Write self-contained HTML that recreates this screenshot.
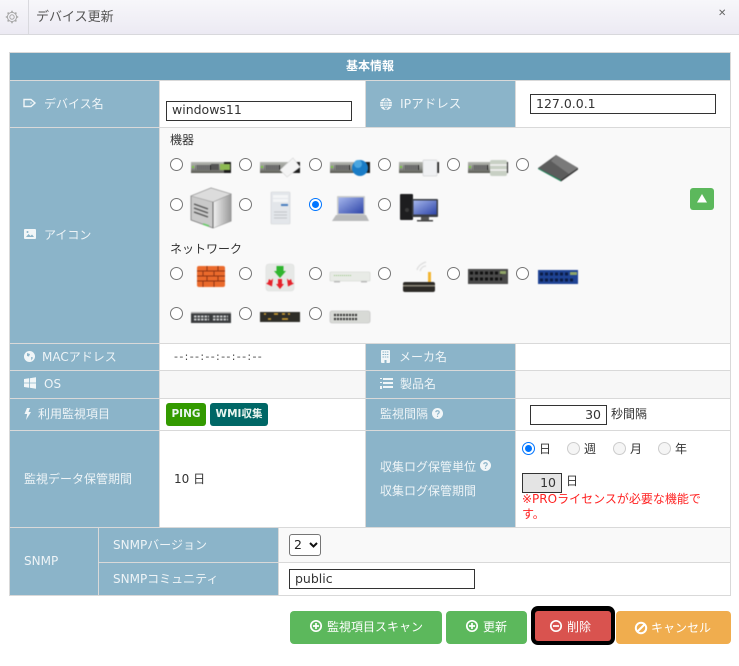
<!DOCTYPE html>
<html lang="ja"><head><meta charset="utf-8"><title>デバイス更新</title>
<style>
html,body{margin:0;padding:0;width:739px;height:666px;overflow:hidden;background:#fff}
body{position:relative;font-family:"DejaVu Sans","Noto Sans CJK JP",sans-serif;font-size:12px;color:#333}
.b{position:absolute}
.th{position:absolute;background:#8bb4c9}
.t{position:absolute;white-space:nowrap;line-height:16px}
.w{color:#eef4f7}
.f{position:absolute;box-sizing:border-box;background:#fff;border:1px solid #333;height:20px;line-height:17px;padding:0 5px;font-size:12.5px;color:#333;white-space:nowrap}
.r{position:absolute;box-sizing:border-box;width:13px;height:13px;border-radius:50%;border:1px solid #767676;background:#fff}
.r.on{border:1.5px solid #0075ff;background:#fff}
.r.on:after{content:"";position:absolute;left:1.5px;top:1.5px;width:7px;height:7px;border-radius:50%;background:#0075ff}
.r.off{border-color:#ccc;background:#f5f5f5}
.btn{position:absolute;box-sizing:border-box;top:611px;height:33px;border-radius:4px;color:#fff;font-size:12px;line-height:33px;text-align:center;white-space:nowrap}
svg{position:absolute;overflow:visible}
.tag{position:absolute;top:403px;height:23px;border-radius:3px;color:#e9f5ef;font-weight:bold;font-size:10.5px;line-height:23px;text-align:center;white-space:nowrap}
</style></head><body>

<!-- title bar -->
<div class="b" style="left:0;top:0;width:739px;height:34px;background:linear-gradient(#f7f7fa,#eceaf3);border-bottom:1px solid #d8d8dc"></div>
<div class="b" style="left:28px;top:0;width:1px;height:34px;background:#d9d9de"></div>
<svg style="left:5px;top:10px" width="14" height="14" viewBox="0 0 14 14" fill="none" stroke="#a8a8a8" stroke-width="1"><circle cx="7" cy="7" r="2.2"/><circle cx="7" cy="7" r="4.6"/><path d="M7 .8v1.600M7 11.600v1.600M.8 7h1.600M11.600 7h1.600M2.600 2.600l1.100 1.100M10.300 10.300l1.100 1.100M2.600 11.400l1.100-1.100M10.300 3.700l1.100-1.100" stroke-width="1.600"/></svg>
<div class="t" style="left:36px;top:10px;font-size:13px;color:#555">デバイス更新</div>
<div class="t" style="left:718px;top:6px;font-size:10px;font-weight:bold;color:#666">✕</div>

<!-- table frame -->
<div class="b" style="left:9px;top:52px;width:722px;height:544px;background:#d9d9d9"></div>
<div class="b" style="left:10px;top:53px;width:720px;height:27px;background:#689eba"></div>
<div class="t" style="left:346px;top:58px;color:#fff;font-size:12px;font-weight:bold">基本情報</div>

<!-- cell backgrounds -->
<div class="th" style="left:10px;top:81px;width:149px;height:46px"></div>
<div class="b" style="left:160px;top:81px;width:205px;height:46px;background:#fff"></div>
<div class="th" style="left:366px;top:81px;width:149px;height:46px"></div>
<div class="b" style="left:516px;top:81px;width:214px;height:46px;background:#fff"></div>

<div class="th" style="left:10px;top:128px;width:149px;height:215px"></div>
<div class="b" style="left:160px;top:128px;width:570px;height:215px;background:#f9f9f9"></div>

<div class="th" style="left:10px;top:344px;width:149px;height:26px"></div>
<div class="b" style="left:160px;top:344px;width:205px;height:26px;background:#fff"></div>
<div class="th" style="left:366px;top:344px;width:149px;height:26px"></div>
<div class="b" style="left:516px;top:344px;width:214px;height:26px;background:#fff"></div>

<div class="th" style="left:10px;top:371px;width:149px;height:27px"></div>
<div class="b" style="left:160px;top:371px;width:205px;height:27px;background:#f7f7f7"></div>
<div class="th" style="left:366px;top:371px;width:149px;height:27px"></div>
<div class="b" style="left:516px;top:371px;width:214px;height:27px;background:#f7f7f7"></div>

<div class="th" style="left:10px;top:399px;width:149px;height:31px"></div>
<div class="b" style="left:160px;top:399px;width:205px;height:31px;background:#fff"></div>
<div class="th" style="left:366px;top:399px;width:149px;height:31px"></div>
<div class="b" style="left:516px;top:399px;width:214px;height:31px;background:#fff"></div>

<div class="th" style="left:10px;top:431px;width:149px;height:96px"></div>
<div class="b" style="left:160px;top:431px;width:205px;height:96px;background:#fff"></div>
<div class="th" style="left:366px;top:431px;width:149px;height:96px"></div>
<div class="b" style="left:516px;top:431px;width:214px;height:96px;background:#fff"></div>

<div class="th" style="left:10px;top:528px;width:88px;height:67px"></div>
<div class="th" style="left:99px;top:528px;width:179px;height:34px"></div>
<div class="th" style="left:99px;top:563px;width:179px;height:32px"></div>
<div class="b" style="left:279px;top:528px;width:451px;height:34px;background:#f9f9f9"></div>
<div class="b" style="left:279px;top:563px;width:451px;height:32px;background:#fff"></div>

<!-- labels -->
<svg style="left:23px;top:98px" width="13" height="10" viewBox="0 0 13 10" fill="none" stroke="#f1f6f8" stroke-width="1.400"><path d="M1 1.500h7l4 3.500-4 3.500H1z"/><circle cx="8" cy="5" r=".7" fill="#f1f6f8" stroke="none"/></svg>
<div class="t w" style="left:44px;top:96px;font-size:12px">デバイス名</div>
<svg style="left:380px;top:98px" width="12" height="12" viewBox="0 0 12 12" fill="none" stroke="#f1f6f8"><circle cx="6" cy="6" r="5.500" fill="#f1f6f8"/><path d="M0 6h12M0 3.400h12M0 8.600h12M6 0v12M6 .5C3 3 3 9 6 11.500M6 .5c3 2.500 3 8.500 0 11" stroke="#8bb4c9" stroke-width=".7"/></svg>
<div class="t w" style="left:400px;top:96px;font-size:12.5px">IPアドレス</div>

<svg style="left:24px;top:229px" width="12" height="10" viewBox="0 0 12 10"><rect width="12" height="10" rx="1" fill="#f1f6f8"/><path d="M2 8l2.500-3 2 2 1.500-1.500L10 8z" fill="#8bb4c9"/><circle cx="3.500" cy="3" r="1" fill="#8bb4c9"/></svg>
<div class="t w" style="left:44px;top:227px;font-size:12px">アイコン</div>

<svg style="left:24px;top:351px" width="11" height="11" viewBox="0 0 11 11"><circle cx="5.500" cy="5.500" r="5.500" fill="#f1f6f8"/><path d="M3 2l3 1-1 2.500-2-.5zM7 6l2 .5-1.500 3z" fill="#8bb4c9"/></svg>
<div class="t w" style="left:42px;top:349px;font-size:12px">MACアドレス</div>
<svg style="left:381px;top:350px" width="9" height="13" viewBox="0 0 9 13"><rect width="9" height="13" rx="1" fill="#f1f6f8"/><path d="M1.500 2h6M1.500 4.500h6M1.500 7h6" stroke="#8bb4c9" stroke-width="1" stroke-dasharray="1.500 .7"/><rect x="3.500" y="10" width="2" height="3" fill="#8bb4c9"/></svg>
<div class="t w" style="left:399px;top:349px;font-size:12px">メーカ名</div>

<svg style="left:24px;top:377px" width="12" height="12" viewBox="0 0 12 12" fill="#f1f6f8"><path d="M0 2l5-.7v4.300H0zM5.800 1.200L12 .3v5.300H5.800zM0 6.400h5v4.300L0 10zM5.800 6.400H12v5.300l-6.200-.9z"/></svg>
<div class="t w" style="left:44px;top:376px;font-size:12px">OS</div>
<svg style="left:380px;top:378px" width="13" height="11" viewBox="0 0 13 11" fill="#f1f6f8"><rect x="3" y="0" width="10" height="2"/><rect x="3" y="4" width="10" height="2"/><rect x="3" y="8" width="10" height="2"/><rect x="0" y="0" width="2" height="1"/><rect x="0" y="4" width="2" height="1"/><rect x="0" y="8" width="2" height="3"/></svg>
<div class="t w" style="left:400px;top:376px;font-size:12px">製品名</div>

<svg style="left:24px;top:408px" width="7" height="12" viewBox="0 0 7 12" fill="#f1f6f8"><path d="M3 0h3L4.500 4H7L2 12l1.200-6H.5z"/></svg>
<div class="t w" style="left:38px;top:406px;font-size:12px">利用監視項目</div>
<div class="t w" style="left:380px;top:406px;font-size:12px">監視間隔</div>
<svg style="left:432px;top:408px" width="11" height="11" viewBox="0 0 11 11"><circle cx="5.500" cy="5.500" r="5.500" fill="#f1f6f8"/><path d="M3.800 4.200C3.900 2.300 7.200 2.300 7.200 4.200 7.200 5.400 5.500 5.400 5.500 6.800" fill="none" stroke="#8bb4c9" stroke-width="1.200"/><rect x="4.900" y="7.700" width="1.200" height="1.200" fill="#8bb4c9"/></svg>

<div class="t w" style="left:24px;top:471px;font-size:12px">監視データ保管期間</div>
<div class="t w" style="left:380px;top:459px;font-size:12px">収集ログ保管単位</div>
<svg style="left:480px;top:460px" width="11" height="11" viewBox="0 0 11 11"><circle cx="5.500" cy="5.500" r="5.500" fill="#f1f6f8"/><path d="M3.800 4.200C3.900 2.300 7.200 2.300 7.200 4.200 7.200 5.400 5.500 5.400 5.500 6.800" fill="none" stroke="#8bb4c9" stroke-width="1.200"/><rect x="4.900" y="7.700" width="1.200" height="1.200" fill="#8bb4c9"/></svg>
<div class="t w" style="left:380px;top:483px;font-size:12px">収集ログ保管期間</div>

<div class="t w" style="left:24px;top:553px;font-size:12px">SNMP</div>
<div class="t w" style="left:113px;top:537px;font-size:12px">SNMPバージョン</div>
<div class="t w" style="left:113px;top:571px;font-size:12px">SNMPコミュニティ</div>

<!-- fields -->
<div class="f" style="left:166px;top:101px;width:186px;line-height:16px">windows11</div>
<div class="f" style="left:530px;top:94px;width:186px">127.0.0.1</div>
<div class="t" style="left:174px;top:349px;font-size:11px;letter-spacing:1.35px;color:#444">--:--:--:--:--:--</div>
<div class="tag" style="left:166px;width:40px;background:#339a00">PING</div>
<div class="tag" style="left:210px;width:58px;background:#006766">WMI収集</div>
<div class="f" style="left:530px;top:405px;width:77px;text-align:right">30</div>
<div class="t" style="left:611px;top:406px;font-size:12px">秒間隔</div>
<div class="t" style="left:174px;top:471px;font-size:12px;color:#333">10 日</div>

<div class="r on" style="left:522px;top:442px"></div><div class="t" style="left:539px;top:441px">日</div>
<div class="r off" style="left:567px;top:442px"></div><div class="t" style="left:584px;top:441px">週</div>
<div class="r off" style="left:613px;top:442px"></div><div class="t" style="left:630px;top:441px">月</div>
<div class="r off" style="left:658px;top:442px"></div><div class="t" style="left:675px;top:441px">年</div>
<div class="f" style="left:522px;top:473px;width:40px;text-align:right;background:#e4e4e4;padding:0 5px">10</div>
<div class="t" style="left:566px;top:473px">日</div>
<div class="t" style="left:522px;top:491px;color:#f22;font-size:12px">※PROライセンスが必要な機能で</div>
<div class="t" style="left:522px;top:506px;color:#f22;font-size:12px">す。</div>

<div class="b" style="left:289px;top:534px;box-sizing:border-box;width:32px;height:22px;border:1px solid #767676;border-radius:3px;background:#fff;font-size:12.5px;line-height:19px;padding-left:4px;color:#222">2</div>
<svg style="left:309px;top:542px" width="9" height="6" viewBox="0 0 9 6" fill="none" stroke="#111" stroke-width="2"><path d="M1 1l3.500 3.500L8 1"/></svg>
<div class="f" style="left:289px;top:569px;width:186px">public</div>

<div class="t" style="left:170px;top:132px;font-size:12px">機器</div>
<div class="t" style="left:170px;top:241px;font-size:12px">ネットワーク</div>

<!-- radios -->
<div class="r" style="left:170px;top:158px"></div><div class="r" style="left:239px;top:158px"></div><div class="r" style="left:309px;top:158px"></div><div class="r" style="left:378px;top:158px"></div><div class="r" style="left:447px;top:158px"></div><div class="r" style="left:516px;top:158px"></div>
<div class="r" style="left:170px;top:198px"></div><div class="r" style="left:239px;top:198px"></div><div class="r on" style="left:309px;top:198px"></div><div class="r" style="left:378px;top:198px"></div>
<div class="r" style="left:170px;top:267px"></div><div class="r" style="left:239px;top:267px"></div><div class="r" style="left:309px;top:267px"></div><div class="r" style="left:378px;top:267px"></div><div class="r" style="left:447px;top:267px"></div><div class="r" style="left:516px;top:267px"></div>
<div class="r" style="left:170px;top:307px"></div><div class="r" style="left:239px;top:307px"></div><div class="r" style="left:309px;top:307px"></div>

<!-- device icons -->
<svg style="left:0;top:0;filter:blur(.4px)" width="739" height="666" viewBox="0 0 739 666">
<defs>
<linearGradient id="rk" x1="0" y1="0" x2="0" y2="1"><stop offset="0" stop-color="#b4b6b0"/><stop offset=".6" stop-color="#8c8e89"/><stop offset="1" stop-color="#55564f"/></linearGradient>
<linearGradient id="sc" x1="0" y1="0" x2="1" y2="0"><stop offset="0" stop-color="#f2f2f2"/><stop offset="1" stop-color="#9a9a9a"/></linearGradient>
<linearGradient id="bl" x1="0" y1="0" x2="1" y2="1"><stop offset="0" stop-color="#a5b6ec"/><stop offset="1" stop-color="#2d44a8"/></linearGradient>
<g id="srv"><rect width="40" height="11" fill="url(#rk)"/><rect x="33" width="7" height="11" fill="#1c1c1c"/><rect x="5" y="3" width="15" height="5" fill="#333"/><path d="M6 3v5M8 3v5M10 3v5M12 3v5M14 3v5M16 3v5M18 3v5" stroke="#c5c5c5" stroke-width=".8"/><rect x="1" y="4" width="2" height="2" fill="#7ac943"/></g>
</defs>

<use href="#srv" x="191" y="162"/><rect x="220" y="164" width="10" height="6" fill="#8dba52"/><rect x="211" y="164" width="8" height="6" fill="#555"/>
<use href="#srv" x="260" y="162"/><path d="M280 170l13-12 7 9-13 10z" fill="#f4f4f4" stroke="#d5d5d5" stroke-width=".6"/>
<use href="#srv" x="330" y="162"/><circle cx="360" cy="168" r="8" fill="#1a7cc6"/><circle cx="358" cy="164" r="4" fill="#4aa6e0"/>
<use href="#srv" x="399" y="162"/><rect x="423" y="160" width="14" height="16" rx="1" fill="#eff0f2" stroke="#d5d6d8" stroke-width=".7"/>
<use href="#srv" x="468" y="162"/><rect x="490" y="160" width="17" height="16" rx="2" fill="#c8d0c4"/><path d="M490 165h17M490 170h17" stroke="#f4f4f4" stroke-width="1.400"/>
<path d="M538 168l18-13 22 13-17 13z" fill="#5c5c5c"/><path d="M556 155l22 13-9 6-18-13z" fill="#7a7a7a"/><path d="M538 168l23 12v1.500L538 169z" fill="#1f7d55"/><path d="M561 180l17-12v1.500l-17 12z" fill="#2d2d2d"/>

<path d="M191 196l20-8 20 6v27l-18 7-22-8z" fill="#c9c9c9" stroke="#777" stroke-width=".8"/><path d="M213 202l18-8v27l-18 7z" fill="url(#sc)"/><path d="M191 196l20-8 20 6-18 8z" fill="#dcdcdc" stroke="#999" stroke-width=".6"/><path d="M213 202v26" stroke="#666"/><path d="M194 204l14 5M194 208l14 5M194 212l14 5" stroke="#555" stroke-width="1.300"/>
<path d="M203 224l6 2" stroke="#6c6" stroke-width="1.500"/>
<rect x="271" y="192" width="19" height="32" rx="1" fill="#e3e6ea" stroke="#d0d3d6" stroke-width=".6"/><rect x="273" y="195" width="15" height="3" fill="#f4f5f6"/><rect x="273" y="199" width="15" height="3" fill="#f4f5f6"/><rect x="281" y="204" width="7" height="2" fill="#4a7fc0"/><path d="M274 212h13M274 215h13M274 218h13" stroke="#c2c5c9"/>

<rect x="337" y="196" width="28" height="19" rx="1" fill="#c9cbcc"/><rect x="338.500" y="197.500" width="25" height="16" fill="url(#bl)"/><path d="M336 215h30l3 6h-37z" fill="#b9babb"/>
<rect x="400" y="194" width="13" height="26" rx="1" fill="#1d1d1f"/><circle cx="407" cy="210" r="2" fill="#3a3a3a"/><rect x="412" y="199" width="26" height="18" rx="1" fill="#3a3d44"/><rect x="413.500" y="200.500" width="23" height="14" fill="url(#bl)"/><rect x="421" y="217" width="8" height="3" fill="#555"/><rect x="417" y="220" width="16" height="1.500" fill="#444"/>

<rect x="197" y="266" width="28" height="21" rx="2" fill="#ea6a2c"/><path d="M197 271h28M197 276h28M197 281h28M207 266v5M218 266v5M203 271v5M214 271v5M207 276v5M218 276v5M203 281v6M214 281v6" stroke="#8e3413" stroke-width="1"/>
<rect x="266" y="264" width="28" height="27" rx="3" fill="#e6e8e6" stroke="#dcdedc" stroke-width=".6"/><path d="M276.500 266h7v5h2.500l-6 7-6-7h2.500z" fill="#2fb52f"/><path d="M269 279l2 1.500 2-2-1 8-6-3 2-1zM278 279h4v5h2l-4 5-4-5h2zM291 279l-2 1.500-2-2 1 8 6-3-2-1z" fill="#e6212b"/>
<rect x="330" y="272" width="40" height="9" rx="1" fill="#e8ebe6" stroke="#cfd2cd" stroke-width=".6"/><path d="M334 275.500h17" stroke="#8fc07a" stroke-dasharray="1 1"/><rect x="334" y="281" width="6" height="1.500" fill="#bbb"/><rect x="361" y="281" width="6" height="1.500" fill="#bbb"/>
<path d="M417 270c1-4 5-7 9-8M420 271c1-3 3-5 6-5" fill="none" stroke="#ddd" stroke-width="1.200"/><rect x="428" y="272" width="3" height="10" fill="#f2b632"/><rect x="403" y="282" width="32" height="10" rx="2" fill="#2c2a26"/><rect x="403" y="285" width="32" height="1.500" fill="#8e8a7c"/>
<rect x="468" y="269" width="40" height="15" fill="#4a4a4a"/><path d="M470 273h32M470 279h32" stroke="#111" stroke-width="3" stroke-dasharray="3 2"/><rect x="500" y="271" width="6" height="3" fill="#90a668"/>
<rect x="538" y="270" width="40" height="14" fill="#1f4394"/><path d="M540 274h30M540 280h34" stroke="#0b1c44" stroke-width="3" stroke-dasharray="3 2"/><rect x="570" y="272" width="7" height="3" fill="#90a668"/>

<rect x="191" y="313" width="40" height="10" fill="#3a3c3e"/><rect x="191" y="312" width="40" height="1.500" fill="#aaa"/><path d="M194 316.500h15M213 316.500h15M194 319.500h15M213 319.500h15" stroke="#c8cacb" stroke-width="2" stroke-dasharray="2.500 1"/>
<rect x="260" y="312" width="40" height="10" fill="#2e2d27"/><path d="M264 314h2M274 314h4M282 314h3M288 314h2M268 319h3M282 319h6" stroke="#d8a531" stroke-width="1.400"/>
<rect x="330" y="311" width="40" height="12" rx="2" fill="#d8dad6" stroke="#bbb" stroke-width=".6"/><path d="M334 315h24M334 319h24" stroke="#333" stroke-width="2.200" stroke-dasharray="2 1"/>
</svg>

<!-- collapse button -->
<div class="b" style="left:690px;top:188px;width:24px;height:22px;border-radius:3px;background:#5cb85c"></div>
<svg style="left:696px;top:194px" width="12" height="10" viewBox="0 0 12 10"><path d="M6 0l5 8.500H1z" fill="#fff"/></svg>

<!-- footer buttons -->
<div class="btn" style="left:290px;width:152px;background:#5cb85c">
<svg style="left:20px;top:9px" width="12" height="12" viewBox="0 0 12 12"><circle cx="6" cy="6" r="5.200" fill="none" stroke="#fff" stroke-width="1.700"/><path d="M3 6h6M6 3v6" stroke="#fff" stroke-width="1.700"/></svg>
<span style="position:absolute;left:37px;top:0">監視項目スキャン</span></div>
<div class="btn" style="left:446px;width:81px;background:#5cb85c">
<svg style="left:20px;top:9px" width="12" height="12" viewBox="0 0 12 12"><circle cx="6" cy="6" r="5.200" fill="none" stroke="#fff" stroke-width="1.700"/><path d="M3 6h6M6 3v6" stroke="#fff" stroke-width="1.700"/></svg>
<span style="position:absolute;left:37px;top:0">更新</span></div>
<div class="b" style="left:531px;top:606px;width:84px;height:39px;box-sizing:border-box;background:#000;border-radius:7px"></div>
<div class="btn" style="left:535px;top:611px;width:76px;height:30px;background:#d9534f;border-radius:3px">
<svg style="left:15px;top:9px" width="12" height="12" viewBox="0 0 12 12"><circle cx="6" cy="6" r="5.200" fill="none" stroke="#fff" stroke-width="1.700"/><path d="M3 6h6" stroke="#fff" stroke-width="1.700"/></svg>
<span style="position:absolute;left:32px;top:0">削除</span></div>
<div class="btn" style="left:616px;width:115px;background:#f0ad4e">
<svg style="left:19px;top:11px" width="12" height="12" viewBox="0 0 12 12"><circle cx="6" cy="6" r="5.200" fill="none" stroke="#fff" stroke-width="2"/><path d="M2.500 9.500l7-7" stroke="#fff" stroke-width="2"/></svg>
<span style="position:absolute;left:35px;top:1px">キャンセル</span></div>

</body></html>
